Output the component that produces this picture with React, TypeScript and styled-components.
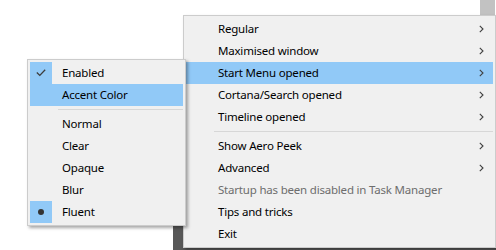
import { FunctionComponent } from 'react';
import styled, { createGlobalStyle } from 'styled-components';

type Mark = 'check' | 'bullet';

interface MenuEntry {
  label?: string;
  separator?: boolean;
  submenu?: boolean;
  disabled?: boolean;
  active?: boolean;
  mark?: Mark;
}

const mainItems: MenuEntry[] = [
  { label: 'Regular', submenu: true },
  { label: 'Maximised window', submenu: true },
  { label: 'Start Menu opened', submenu: true, active: true },
  { label: 'Cortana/Search opened', submenu: true },
  { label: 'Timeline opened', submenu: true },
  { separator: true },
  { label: 'Show Aero Peek', submenu: true },
  { label: 'Advanced', submenu: true },
  { label: 'Startup has been disabled in Task Manager', disabled: true },
  { label: 'Tips and tricks' },
  { label: 'Exit' },
];

const subItems: MenuEntry[] = [
  { label: 'Enabled', mark: 'check' },
  { label: 'Accent Color', active: true },
  { separator: true },
  { label: 'Normal' },
  { label: 'Clear' },
  { label: 'Opaque' },
  { label: 'Blur' },
  { label: 'Fluent', mark: 'bullet' },
];

const CheckIcon = () => (
  <svg width="10" height="8" viewBox="0 0 10 8">
    <path d="M0.8 3.6 L3.8 6.4 L9.2 0.8" fill="none" stroke="#3c3c3c" strokeWidth="1.3" />
  </svg>
);

const ChevronIcon = () => (
  <svg width="5" height="8" viewBox="0 0 5 8">
    <path d="M0.8 0.8 L4 4 L0.8 7.2" fill="none" stroke="#404040" strokeWidth="1.1" />
  </svg>
);

const MenuList: FunctionComponent<{ items: MenuEntry[] }> = ({ items }) => (
  <>
    {items.map((item, i) =>
      item.separator ? (
        <Separator key={i} />
      ) : (
        <Row key={i} $active={item.active} $disabled={item.disabled}>
          <MarkCell $marked={!!item.mark}>
            {item.mark === 'check' && <CheckIcon />}
            {item.mark === 'bullet' && <Bullet />}
          </MarkCell>
          <Label>{item.label}</Label>
          <ArrowCell>{item.submenu && <ChevronIcon />}</ArrowCell>
        </Row>
      )
    )}
  </>
);

const App = () => (
  <>
    <GlobalStyle />
    <Desktop>
      <BackWindow />
      <ScrollThumb />
      <MainMenu>
        <MenuList items={mainItems} />
      </MainMenu>
      <SubMenu>
        <MenuList items={subItems} />
      </SubMenu>
    </Desktop>
  </>
);

const GlobalStyle = createGlobalStyle`
  html, body {
    margin: 0;
    padding: 0;
    background: #ffffff;
  }
  body {
    font-family: "Noto Sans", "Open Sans", sans-serif;
  }
`;

const Desktop = styled.div`
  position: relative;
  width: 496px;
  height: 250px;
  overflow: hidden;
  background: #ffffff;
`;

const BackWindow = styled.div`
  position: absolute;
  left: 173px;
  top: 200px;
  right: 0;
  bottom: 0;
  background: #585858;
`;

const ScrollThumb = styled.div`
  position: absolute;
  left: 480px;
  top: 0;
  width: 15px;
  height: 20px;
  background: #c2c2c2;
`;

const Popup = styled.div`
  position: absolute;
  box-sizing: border-box;
  padding: 2px;
  background: #f0f0f0;
  border: 1px solid #cccccc;
  box-shadow: 2px 2px 3px rgba(0, 0, 0, 0.35);
  display: flex;
  flex-direction: column;
`;

const MainMenu = styled(Popup)`
  left: 183px;
  top: 15px;
  width: 313px;
  height: 233px;
  z-index: 1;
`;

const SubMenu = styled(Popup)`
  left: 27px;
  top: 59px;
  width: 159px;
  height: 167px;
  z-index: 2;
`;

const Row = styled.div<{ $active?: boolean; $disabled?: boolean }>`
  display: grid;
  grid-template-columns: 32px 1fr 24px;
  align-items: center;
  height: 22px;
  flex-shrink: 0;
  background: ${(p) => (p.$active ? '#91c9f7' : 'transparent')};
  color: ${(p) => (p.$disabled ? '#6d6d6d' : '#000000')};
`;

const MarkCell = styled.div<{ $marked: boolean }>`
  width: 22px;
  height: 22px;
  display: flex;
  align-items: center;
  justify-content: center;
  background: ${(p) => (p.$marked ? '#91c9f7' : 'transparent')};
`;

const Bullet = styled.span`
  width: 6px;
  height: 6px;
  border-radius: 50%;
  background: #333333;
`;

const Label = styled.span`
  font-size: 11.5px;
  letter-spacing: -0.2px;
  line-height: 22px;
  white-space: nowrap;
`;

const ArrowCell = styled.div`
  display: flex;
  align-items: center;
  justify-content: center;
`;

const Separator = styled.div`
  height: 7px;
  flex-shrink: 0;
  display: flex;
  align-items: center;
  padding-left: 28px;

  &::after {
    content: '';
    flex: 1;
    height: 1px;
    background: #d7d7d7;
  }
`;

export default App;
